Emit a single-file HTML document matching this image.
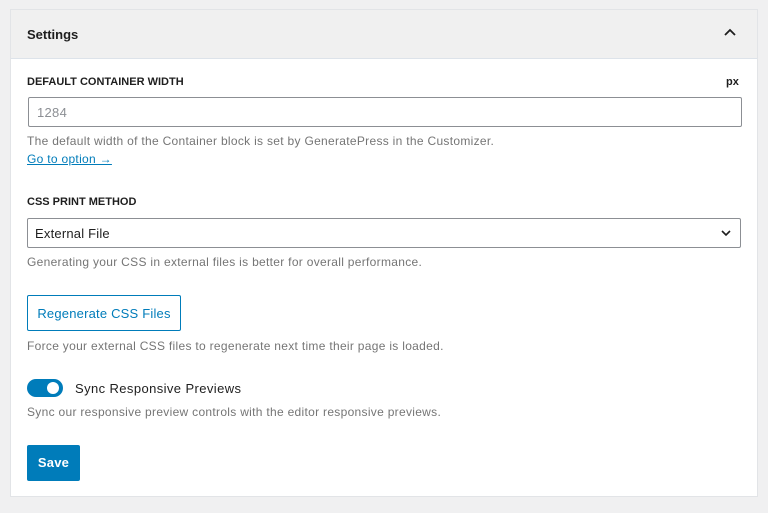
<!DOCTYPE html>
<html><head><style>
*{box-sizing:border-box;margin:0;padding:0}
body{width:768px;height:513px;background:#f0f0f1;font-family:"Liberation Sans",sans-serif;color:#1e1e1e;position:relative;overflow:hidden}
.panel{position:absolute;left:10px;top:9px;width:748px;height:488px;background:#fff;border:1px solid #e2e4e7}
.hd{height:49px;background:#f0f0f0;border-bottom:1px solid #dde3ea;position:relative}
.hd span{position:absolute;left:16px;top:17px;font-size:13px;font-weight:bold;color:#1e1e1e}
.hd svg{position:absolute;right:20px;top:18px}
.a{position:absolute;font-size:13px;letter-spacing:.2px}
.lab{font-size:11px;font-weight:bold;letter-spacing:0;color:#1e1e1e}
.help{font-size:12px;color:#757575;letter-spacing:.3px;top:1px}
.inp{position:absolute;border:1px solid #8c8f94;border-radius:2px;background:#fff;height:30px}
</style></head><body>
<div class="panel">
<div class="hd"><span>Settings</span><svg width="14" height="10" viewBox="0 0 14 10"><path d="M2 7l5-5 5 5" fill="none" stroke="#1e1e1e" stroke-width="1.8"/></svg></div>
</div>
<div class="a lab" style="left:27px;top:76px">DEFAULT CONTAINER WIDTH</div>
<div class="a lab" style="left:726px;top:76px">px</div>
<div class="inp" style="left:28px;top:97px;width:714px"><span style="position:absolute;left:8px;top:7px;font-size:13px;color:#8c8f94;letter-spacing:.3px">1284</span></div>
<div class="a help" style="left:27px;top:134px">The default width of the Container block is set by GeneratePress in the Customizer.</div>
<div class="a" style="left:27px;top:152px;font-size:12px;color:#007cba;text-decoration:underline;letter-spacing:.3px">Go to option →</div>
<div class="a lab" style="left:27px;top:196px">CSS PRINT METHOD</div>
<div class="inp" style="left:27px;top:218px;width:714px"><span style="position:absolute;left:7px;top:7px;font-size:13px;color:#1e1e1e;letter-spacing:.2px">External File</span><svg style="position:absolute;right:8px;top:10px" width="12" height="8" viewBox="0 0 12 8"><path d="M2 2l4 4 4-4" fill="none" stroke="#1e1e1e" stroke-width="1.6"/></svg></div>
<div class="a help" style="left:27px;top:255px">Generating your CSS in external files is better for overall performance.</div>
<div class="a" style="left:27px;top:295px;width:154px;height:36px;border:1px solid #007cba;border-radius:2px;color:#007cba;font-size:13px;text-align:center;line-height:36px">Regenerate CSS Files</div>
<div class="a help" style="left:27px;top:339px">Force your external CSS files to regenerate next time their page is loaded.</div>
<div class="a" style="left:27px;top:379px;width:36px;height:18px;border-radius:9px;background:#007cba"><div style="position:absolute;right:4px;top:3px;width:12px;height:12px;border-radius:50%;background:#fff"></div></div>
<div class="a" style="left:75px;top:381px;color:#1e1e1e;letter-spacing:.4px">Sync Responsive Previews</div>
<div class="a help" style="left:27px;top:405px">Sync our responsive preview controls with the editor responsive previews.</div>
<div class="a" style="left:27px;top:445px;width:53px;height:36px;background:#007cba;border-radius:2px;color:#fff;font-size:13px;font-weight:bold;text-align:center;line-height:36px">Save</div>
</body></html>
